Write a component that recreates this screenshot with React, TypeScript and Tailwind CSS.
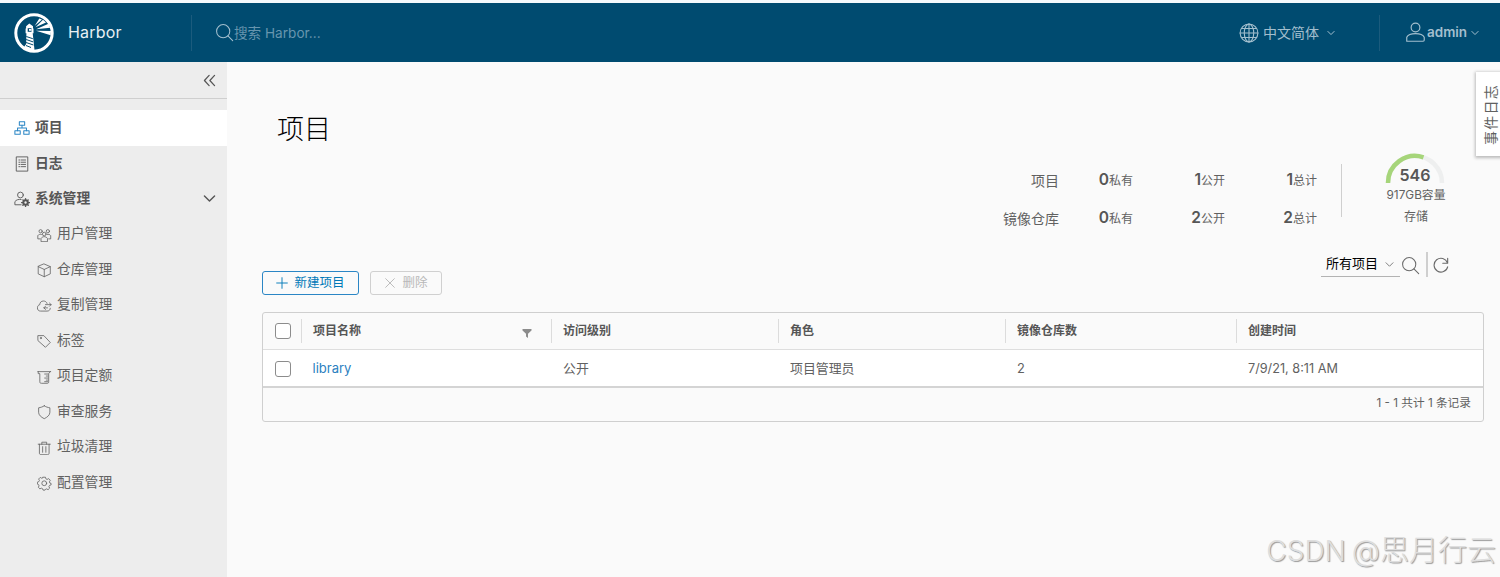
import type { ReactNode } from "react";

const LINE = { fill: "none", stroke: "currentColor", strokeLinecap: "round", strokeLinejoin: "round" } as const;

interface IconProps {
  className?: string;
  children: ReactNode;
}

// 36x36 grid, outline style
function Icon({ className = "size-4 stroke-2", children }: IconProps) {
  return (
    <svg viewBox="0 0 36 36" className={`shrink-0 ${className}`} {...LINE}>
      {children}
    </svg>
  );
}

const icons = {
  projects: (
    <>
      <rect x="12" y="4" width="12" height="8" />
      <rect x="2" y="24" width="12" height="8" />
      <rect x="22" y="24" width="12" height="8" />
      <path d="M18 12v6M8 24v-6h20v6" />
    </>
  ),
  logs: (
    <>
      <rect x="6" y="2" width="25" height="32" />
      <path d="M11 9h2M16 9h10M11 14h2M16 14h10M11 19h2M16 19h10M11 24h2M16 24h10" />
    </>
  ),
  admin: (
    <>
      <circle cx="14.5" cy="9" r="6.5" />
      <path d="M16 31H2v-7c3-4 8-6 14-5" />
      <circle cx="26" cy="26" r="5" strokeWidth={4.5} />
      <path d="M26 17v3M26 32v3M17 26h3M32 26h3M20 20l2 2M30 30l2 2M20 32l2-2M30 22l2-2" strokeWidth={3} />
    </>
  ),
  users: (
    <>
      <circle cx="18" cy="15" r="4.5" />
      <path d="M10 33v-7c4-6 12-6 16 0v7z" />
      <circle cx="9" cy="8" r="4" />
      <circle cx="27" cy="8" r="4" />
      <path d="M7 27H2v-8c2-3 5-4 9-3M29 27h5v-8c-2-3-5-4-9-3" />
    </>
  ),
  registry: <path d="M18 2.5 33 9v18L18 34 3 27V9zM3 9l15 7 15-7M18 16v18" />,
  replication: (
    <>
      <path d="M25 11c-1-4-5-6-9-6-6 0-9 4-9 9-4 1-6 4-6 8 0 5 3 8 8 8h16c5 0 8-3 8-7" />
      <path d="M35 14H21M31 10l4 4-4 4M26 22h-9M21 18l-4 4 4 4" />
    </>
  ),
  tag: (
    <>
      <path d="M3 4h14l16 17-12 12L3 17z" />
      <circle cx="9.500" cy="10" r="1.500" />
    </>
  ),
  quota: (
    <path d="M2 4h32M3 4v5h4v20c0 3 1 4 4 4h14c3 0 4-1 4-4V9l4-5M19 10h8M23 15h4M19 20h8M23 25h4M19 29h8" />
  ),
  shield: <path d="M18 2c4 3 9 4 14 5v11c0 7-6 12-14 16C10 30 4 25 4 18V7c5-1 10-2 14-5z" />,
  trash: <path d="M3 8h30M12 8V3h12v5M6 8v22c0 2 1 4 4 4h16c3 0 4-2 4-4V8M14 14v14M22 14v14" />,
  gear: (
    <>
      <circle cx="18" cy="18" r="6" />
      <path d="M15 3h6l1 4 3 1.500 4-2 4 4-2.200 4L32 17.500l3 1V22l-4 1.500-1.500 3 2 3.500-4 4-3.500-2-3 1.200L20 35h-5l-1.200-3.500-3-1.300-3.800 1.800-3.500-4 1.500-3.800L4 21.500l-3-1.300v-5l3.500-1.200L6 11 4 7.500l4-4 3.500 2L14 4.500z" />
    </>
  ),
  search: (
    <>
      <circle cx="15.500" cy="15.500" r="12.500" />
      <path d="m24.500 24.500 9 9" />
    </>
  ),
  globe: (
    <>
      <circle cx="18" cy="18" r="16" />
      <ellipse cx="18" cy="18" rx="8.500" ry="16" />
      <path d="M18 2v32M2 18h32M5 10h26M5 26h26" />
    </>
  ),
  user: (
    <>
      <circle cx="18" cy="9.500" r="7.500" />
      <path d="M3 33v-7c2-4 8-6 15-6s13 2 15 6v5c0 1-1 2-2 2z" />
    </>
  ),
  angle: <path d="m4 11 14 14 14-14" />,
  collapse: <path d="M17 4 4 18l13 14M32 4 19 18l13 14" />,
  plus: <path d="M18 2v32M2 18h32" />,
  close: <path d="m5 5 26 26M31 5 5 31" />,
  refresh: <path d="M33 3v11H22M32.500 13A15.500 15.500 0 1 0 33 22" />,
};

type IconName = keyof typeof icons;

function HarborLogo() {
  return (
    <svg viewBox="0 0 40 40" className="size-10">
      <circle cx="20" cy="20" r="18.200" fill="none" stroke="#fff" strokeWidth="3" />
      <path fill="#fff" d="M15.300 10.500 19 13.200v2.300h.5v4.800h-.8L20.500 37c-3.500.8-8.500 0-10.500-3l2.200-3 .2-10.700h-.8v-4.800h.5v-2.300z" />
      <path fill="#004b70" d="M13.700 15.200h3.800v3.600h-3.800z" />
      <path fill="#fff" d="M15 16h2.500v1.800H15z" />
      <path stroke="#004b70" strokeWidth="1" d="m12.300 23.500 6.500 2.200M12.200 26.500l6.900 2.400M12.100 29.500l7.300 2.500M12 32.500l5 2" />
      <path fill="#fff" d="m21.500 14.200 7.500-7.400 3 2.600zM22 16.200l12.500-5.400 1.700 4zM22 17.800l15 .2-.3 4.300zM20.800 12.800l4.500-7.300 2.700 1z" />
    </svg>
  );
}

const subItems: { icon: IconName; label: string }[] = [
  { icon: "users", label: "用户管理" },
  { icon: "registry", label: "仓库管理" },
  { icon: "replication", label: "复制管理" },
  { icon: "tag", label: "标签" },
  { icon: "quota", label: "项目定额" },
  { icon: "shield", label: "审查服务" },
  { icon: "trash", label: "垃圾清理" },
  { icon: "gear", label: "配置管理" },
];

const stats = [
  { label: "项目", values: [["0", "私有"], ["1", "公开"], ["1", "总计"]] },
  { label: "镜像仓库", values: [["0", "私有"], ["2", "公开"], ["2", "总计"]] },
];

function Header() {
  return (
    <header className="flex h-[62px] shrink-0 items-center border-t-[3px] border-[#f5f9fc] bg-[#004b70] text-[#a3bfce]">
      <div className="flex w-[191px] items-center pl-[14px]">
        <HarborLogo />
        <span className="-mt-px ml-[14px] text-[16px] tracking-[0.2px] text-[#e8f0f4]">Harbor</span>
      </div>
      <div className="flex h-9 flex-1 items-center border-l border-[#1b5b7d] pl-[23px]">
        <Icon className="size-[19px] stroke-2">{icons.search}</Icon>
        <span className="mt-px text-[13.600px] text-[#6795ae]">搜索 Harbor...</span>
      </div>
      <div className="flex w-[140px] items-center">
        <Icon className="size-5 stroke-2">{icons.globe}</Icon>
        <span className="-mt-px ml-1 text-[14px]">中文简体</span>
        <Icon className="ml-2 size-2 stroke-[4.500]">{icons.angle}</Icon>
      </div>
      <div className="flex h-9 w-[121px] items-center border-l border-[#1b5b7d] pl-[25px]">
        <Icon className="size-[21px] stroke-2">{icons.user}</Icon>
        <span className="ml-px text-[13.500px] font-semibold">admin</span>
        <Icon className="ml-1 size-2 stroke-[4.500]">{icons.angle}</Icon>
      </div>
    </header>
  );
}

function Sidebar() {
  return (
    <nav className="w-[227px] shrink-0 bg-[#ededed] text-[#565656]">
      <div className="flex h-[37px] items-center justify-end border-b border-[#cfcfcf] pr-[11px]">
        <Icon className="size-[13px] stroke-[3.500]">{icons.collapse}</Icon>
      </div>
      <div className="mt-[11px] flex h-9 items-center bg-white pl-[14px] text-[13.800px] font-bold">
        <Icon className="size-4 stroke-[2.300] text-[#2b86c5]">{icons.projects}</Icon>
        <span className="-mt-0.5 ml-[5px]">项目</span>
      </div>
      <div className="flex h-[35px] items-center pl-[14px] text-[13.800px] font-bold">
        <Icon>{icons.logs}</Icon>
        <span className="-mt-px ml-[5px]">日志</span>
      </div>
      <div className="flex h-[35px] items-center pl-[14px] pr-[11px] text-[13.800px] font-bold">
        <Icon>{icons.admin}</Icon>
        <span className="ml-[5px] flex-1">系统管理</span>
        <Icon className="size-[13px] stroke-[4]">{icons.angle}</Icon>
      </div>
      {subItems.map((item) => (
        <div key={item.label} className="flex h-[35.500px] items-center pl-[37px] text-[13.800px] text-[#616161]">
          <Icon className="mt-0.5 size-[14.500px] stroke-2">{icons[item.icon]}</Icon>
          <span className="ml-[5.500px]">{item.label}</span>
        </div>
      ))}
    </nav>
  );
}

function Summary() {
  return (
    <div className="flex h-[86px] justify-end pr-[49px]">
      <div className="mt-[11px] w-[340px] text-[#616161]">
        {stats.map((row) => (
          <div key={row.label} className="flex h-[38px] items-center">
            <span className="w-[58px] text-right text-[14px]">{row.label}</span>
            {row.values.map(([count, label], i) => (
              <span key={label} className={`flex items-baseline justify-end ${i === 0 ? "w-[74px]" : "w-[92px]"}`}>
                <span className="text-[15.500px] font-semibold leading-5 text-[#565656]">{count}</span>
                <span className="text-[12px]">{label}</span>
              </span>
            ))}
          </div>
        ))}
      </div>
      <div className="mt-[14px] h-[53px] w-px bg-[#cfcfcf]" />
      <div className="ml-[39px] flex w-[70px] flex-col items-center pt-px text-[#616161]">
        <div className="relative -ml-[2px] h-[34px] w-[60px]">
          <svg viewBox="0 0 60 34" className="h-[34px] w-[60px]" fill="none" strokeWidth="4.500">
            <path stroke="#eeefef" d="M3 32a27 27 0 0 1 54 0" />
            <path stroke="#a6d57a" d="M3 32A27 27 0 0 1 38.500 6.300" />
          </svg>
          <span className="absolute inset-x-0 top-[14px] text-center text-[16px] leading-5 font-semibold text-[#565656]">546</span>
        </div>
        <span className="mt-[2px] whitespace-nowrap text-[11.800px] leading-4">917GB容量</span>
        <span className="mt-[6px] text-[12px] leading-4">存储</span>
      </div>
    </div>
  );
}

function Toolbar() {
  return (
    <div className="flex h-[60px] justify-between pr-[51px]">
      <div className="mt-[35px] flex gap-[11px] pl-[35px] text-[12.500px]">
        <button className="flex h-6 w-[97px] items-center justify-center rounded-[3px] border border-[#2b86c5] text-[#0079b8]">
          <Icon className="mr-[6px] size-3 stroke-[2.800]">{icons.plus}</Icon>
          新建项目
        </button>
        <button className="flex h-6 w-[72px] items-center justify-center rounded-[3px] border border-[#d0d0d0] text-[#b8b8b8]">
          <Icon className="mr-[6px] size-3 stroke-[2.800]">{icons.close}</Icon>
          删除
        </button>
      </div>
      <div className="mt-[16px] flex h-[25px] text-[#6b6b6b]">
        <div className="flex w-[79px] items-center border-b border-[#b3b3b3] pl-[5px] text-[13px] text-black">
          所有项目
          <Icon className="ml-[7px] size-[9px] stroke-[4] text-[#808080]">{icons.angle}</Icon>
        </div>
        <div className="flex w-[28px] items-center border-r-2 border-[#cfcfcf] pl-[1px]">
          <Icon className="mt-0.5 size-[19px] stroke-2">{icons.search}</Icon>
        </div>
        <Icon className="mt-[5px] ml-[5px] size-4 stroke-[2.500]">{icons.refresh}</Icon>
      </div>
    </div>
  );
}

function Checkbox() {
  return <span className="ml-[12px] block size-4 rounded-[3px] border border-[#8c8c8c] bg-white" />;
}

const columns = ["项目名称", "访问级别", "角色", "镜像仓库数", "创建时间"];
const gridCols = "grid grid-cols-[38px_250px_227px_227px_231px_1fr] items-center";

function ProjectTable() {
  return (
    <div className="mt-[16px] ml-[35px] h-[110px] w-[1222px] overflow-hidden rounded-[3px] border border-[#cfcfcf] bg-[#fafafa] text-[12.900px] text-[#616161]">
      <div className={`${gridCols} h-[37px] border-b border-[#dedede] text-[12px] font-bold text-[#565656]`}>
        <Checkbox />
        {columns.map((column, i) => (
          <div key={column} className="flex h-6 items-center justify-between border-l border-[#dcdcdc] pr-[19px] pl-[11px]">
            {column}
            {i === 0 && (
              <svg viewBox="0 0 10 9" className="mt-1 h-[9px] w-[10px] fill-[#8c8c8c]">
                <path d="M.5 0h9v1.500L6 4.800V9L4 7.500V4.800L.5 1.500z" />
              </svg>
            )}
          </div>
        ))}
      </div>
      <div className={`${gridCols} h-[38px] border-b-2 border-[#d4d4d4] bg-white pt-px`}>
        <Checkbox />
        <span className="pl-[11.500px] text-[13px] text-[#2b80c0]">library</span>
        <span className="pl-[12px]">公开</span>
        <span className="pl-[12px]">项目管理员</span>
        <span className="pl-[12px]">2</span>
        <span className="pl-[12px] text-[12.700px]">7/9/21, 8:11 AM</span>
      </div>
      <div className="flex h-[32px] items-center justify-end pr-[12px] text-[11.700px]">1 - 1 共计 1 条记录</div>
    </div>
  );
}

export default function App() {
  return (
    <div className="relative flex h-[577px] w-[1500px] flex-col overflow-hidden bg-[#fafafa] font-['Inter','Noto_Sans_CJK_SC',sans-serif]">
      <Header />
      <div className="flex min-h-0 flex-1">
        <Sidebar />
        <main className="min-w-0 flex-1">
          <h1 className="flex h-[88px] items-end pl-[50px] text-[27px] leading-[40px] font-light text-black">项目</h1>
          <Summary />
          <Toolbar />
          <ProjectTable />
        </main>
      </div>
      <div className="absolute top-[72px] -right-1 flex h-[84px] w-7 items-center justify-center bg-white text-[14px] text-[#616161] shadow-[0_1px_3px_1px_#bbbbbb]">
        <span className="-rotate-90 whitespace-nowrap tracking-[1.200px]">事件日志</span>
      </div>
      <div className="absolute right-[4px] bottom-[6px] text-[29px] leading-10 font-light whitespace-nowrap text-[#dedede] [text-shadow:1px_1px_1px_#999]">
        <span className="mr-[6px] text-[28px]">CSDN</span>
        <span>@思月行云</span>
      </div>
    </div>
  );
}
